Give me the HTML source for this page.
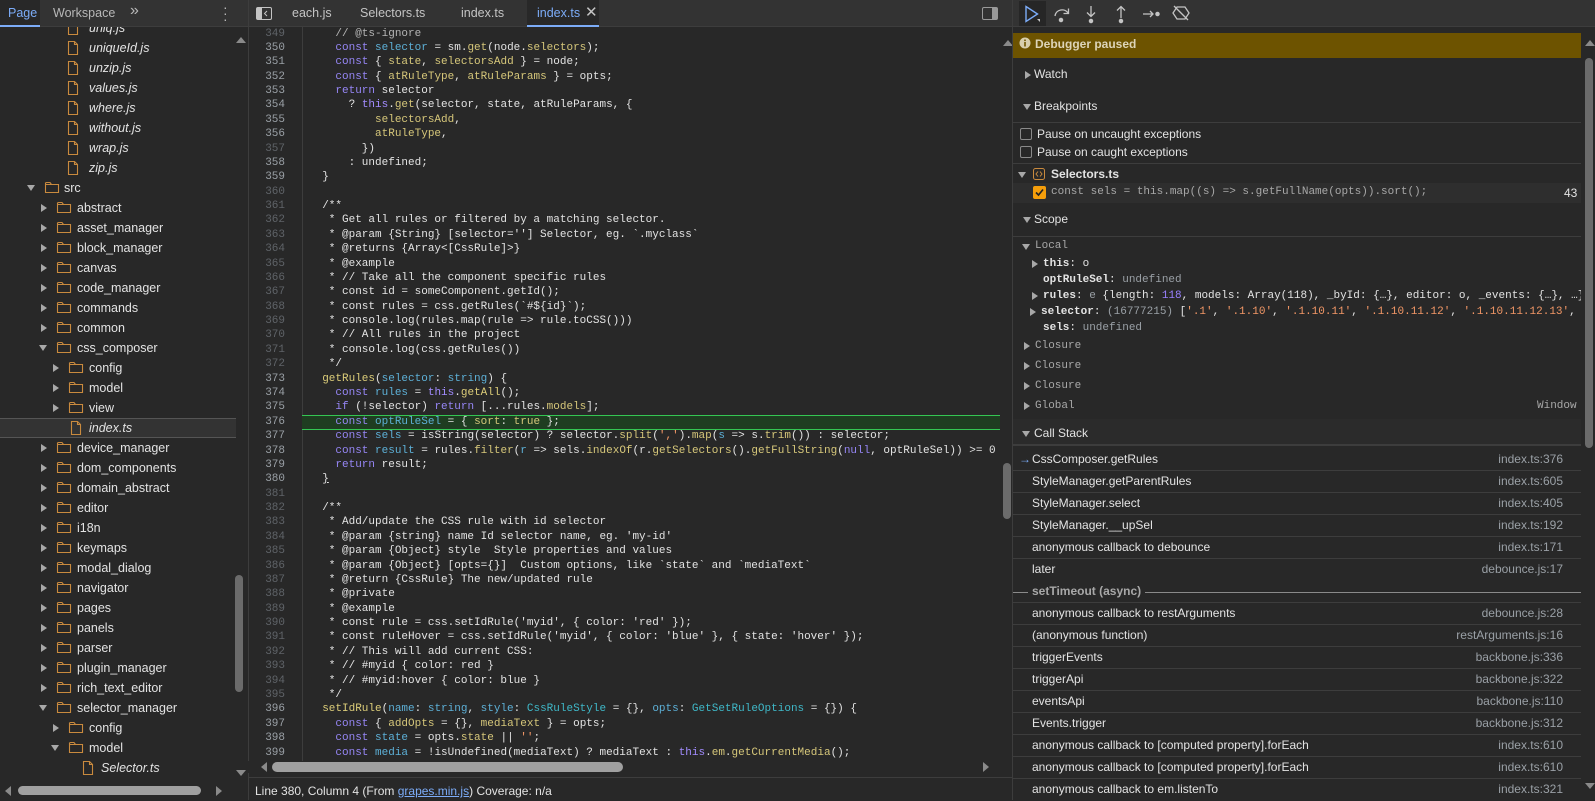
<!DOCTYPE html>
<html><head><meta charset="utf-8"><style>
*{box-sizing:border-box;margin:0;padding:0}
body{width:1595px;height:800px;background:#282828;overflow:hidden;position:relative;font-family:"Liberation Sans",sans-serif;font-size:12px;color:#e3e3e3}
.abs{position:absolute}
.hdr{position:absolute;top:0;height:27px;background:#333;border-bottom:1px solid #3d3d3d}
.tr{position:absolute;width:8px;height:8px}
.tr.r{border-left:6px solid #a8a8a8;border-top:4px solid transparent;border-bottom:4px solid transparent;width:0;height:0}
.tr.d{border-top:6px solid #a8a8a8;border-left:4px solid transparent;border-right:4px solid transparent;width:0;height:0}
.row{position:absolute;left:0;width:236px;height:20px;line-height:20px;white-space:nowrap;font-size:12.5px;color:#e3e3e3}
.row .tr.r{top:6px}.row .tr.d{top:7px}
.row svg{position:absolute;top:2px}
.row span.tx{position:absolute;color:#e3e3e3}
.it{font-style:italic}
.code{position:absolute;left:248px;top:26.5px;width:752px;height:734px;overflow:hidden}
.ln{position:absolute;left:0;width:752px;height:14.38px;line-height:14.38px;font-family:"Liberation Mono",monospace;font-size:11px;white-space:pre}
.ln b{position:absolute;right:715px;font-weight:normal;color:#9aa0a6;width:40px;text-align:right}
.ln b.dm{color:#5f6368}
.ln i{position:absolute;left:61px;font-style:normal;color:#e3e3e3}
.k{color:#9686f5}.d{color:#5db0d7}.p{color:#d6c77a}.f{color:#dccd79}.c{color:#b4b4b4}.s{color:#f29766}.t{color:#3fb8c8}.th{color:#a28cff}
.cs{position:absolute;left:1013px;width:568px;height:22px;line-height:21px;border-bottom:1px solid #3d3d3d}
.cs .n{position:absolute;left:19px}
.cs .l{position:absolute;right:18px;color:#9aa0a6}
.m{font-family:"Liberation Mono",monospace;font-size:11px}
.cb{position:absolute;width:12px;height:12px;border:1px solid #8a8a8a;border-radius:2px}
</style></head><body>

<!-- LEFT PANEL -->
<div class="hdr" style="left:0;width:248px"></div>
<div class="abs" style="left:0;top:0;width:40px;height:27px;background:#282828;border-bottom:2px solid #7cacf8"></div>
<div class="abs" style="left:8px;top:6px;color:#7cacf8;font-size:12.5px">Page</div>
<div class="abs" style="left:53px;top:6px;color:#b8b8b8;font-size:12.5px">Workspace</div>
<div class="abs" style="left:130px;top:2px;color:#b8b8b8;font-size:16px">»</div>
<div class="abs" style="left:223px;top:4px;color:#b8b8b8;font-size:14px;line-height:6px">·<br>·<br>·</div>
<div class="abs" style="left:248px;top:0;width:1px;height:800px;background:#3d3d3d"></div>

<svg width="0" height="0" style="position:absolute"><defs>
<symbol id="fo" viewBox="0 0 16 14"><path d="M1.5 3V12.5H14.5V4.5H7.5L6 2.5H2.5Z M1.5 4.5H14.5" fill="none" stroke="#c98a3e" stroke-width="1.1"/></symbol>
<symbol id="fi" viewBox="0 0 12 16"><path d="M1.5 1.5H7.5L10.5 4.5V14.5H1.5Z M7.5 1.5V4.5H10.5" fill="none" stroke="#c98a3e" stroke-width="1.1"/></symbol>
</defs></svg>

<div class="abs" style="left:0;top:27px;width:248px;height:754px;overflow:hidden">
<div style="position:absolute;left:0;top:-27px;width:248px">
<div class="row" style="top:18px"><svg style="left:67px" width="12" height="16"><use href="#fi"/></svg><span class="tx it" style="left:89px">uniq.js</span></div>
<div class="row" style="top:38px"><svg style="left:67px" width="12" height="16"><use href="#fi"/></svg><span class="tx it" style="left:89px">uniqueId.js</span></div>
<div class="row" style="top:58px"><svg style="left:67px" width="12" height="16"><use href="#fi"/></svg><span class="tx it" style="left:89px">unzip.js</span></div>
<div class="row" style="top:78px"><svg style="left:67px" width="12" height="16"><use href="#fi"/></svg><span class="tx it" style="left:89px">values.js</span></div>
<div class="row" style="top:98px"><svg style="left:67px" width="12" height="16"><use href="#fi"/></svg><span class="tx it" style="left:89px">where.js</span></div>
<div class="row" style="top:118px"><svg style="left:67px" width="12" height="16"><use href="#fi"/></svg><span class="tx it" style="left:89px">without.js</span></div>
<div class="row" style="top:138px"><svg style="left:67px" width="12" height="16"><use href="#fi"/></svg><span class="tx it" style="left:89px">wrap.js</span></div>
<div class="row" style="top:158px"><svg style="left:67px" width="12" height="16"><use href="#fi"/></svg><span class="tx it" style="left:89px">zip.js</span></div>
<div class="row" style="top:178px"><i class="tr d" style="left:27px"></i><svg style="left:44px" width="16" height="14"><use href="#fo"/></svg><span class="tx" style="left:64px">src</span></div>
<div class="row" style="top:198px"><i class="tr r" style="left:41px"></i><svg style="left:56px" width="16" height="14"><use href="#fo"/></svg><span class="tx" style="left:77px">abstract</span></div>
<div class="row" style="top:218px"><i class="tr r" style="left:41px"></i><svg style="left:56px" width="16" height="14"><use href="#fo"/></svg><span class="tx" style="left:77px">asset_manager</span></div>
<div class="row" style="top:238px"><i class="tr r" style="left:41px"></i><svg style="left:56px" width="16" height="14"><use href="#fo"/></svg><span class="tx" style="left:77px">block_manager</span></div>
<div class="row" style="top:258px"><i class="tr r" style="left:41px"></i><svg style="left:56px" width="16" height="14"><use href="#fo"/></svg><span class="tx" style="left:77px">canvas</span></div>
<div class="row" style="top:278px"><i class="tr r" style="left:41px"></i><svg style="left:56px" width="16" height="14"><use href="#fo"/></svg><span class="tx" style="left:77px">code_manager</span></div>
<div class="row" style="top:298px"><i class="tr r" style="left:41px"></i><svg style="left:56px" width="16" height="14"><use href="#fo"/></svg><span class="tx" style="left:77px">commands</span></div>
<div class="row" style="top:318px"><i class="tr r" style="left:41px"></i><svg style="left:56px" width="16" height="14"><use href="#fo"/></svg><span class="tx" style="left:77px">common</span></div>
<div class="row" style="top:338px"><i class="tr d" style="left:39px"></i><svg style="left:56px" width="16" height="14"><use href="#fo"/></svg><span class="tx" style="left:77px">css_composer</span></div>
<div class="row" style="top:358px"><i class="tr r" style="left:53px"></i><svg style="left:68px" width="16" height="14"><use href="#fo"/></svg><span class="tx" style="left:89px">config</span></div>
<div class="row" style="top:378px"><i class="tr r" style="left:53px"></i><svg style="left:68px" width="16" height="14"><use href="#fo"/></svg><span class="tx" style="left:89px">model</span></div>
<div class="row" style="top:398px"><i class="tr r" style="left:53px"></i><svg style="left:68px" width="16" height="14"><use href="#fo"/></svg><span class="tx" style="left:89px">view</span></div>
<div class="row" style="top:418px;background:#333;border-top:1px solid #555;border-bottom:1px solid #555"><svg style="left:70px;top:1px" width="12" height="16"><use href="#fi"/></svg><span class="tx it" style="left:89px;top:-1px">index.ts</span></div>
<div class="row" style="top:438px"><i class="tr r" style="left:41px"></i><svg style="left:56px" width="16" height="14"><use href="#fo"/></svg><span class="tx" style="left:77px">device_manager</span></div>
<div class="row" style="top:458px"><i class="tr r" style="left:41px"></i><svg style="left:56px" width="16" height="14"><use href="#fo"/></svg><span class="tx" style="left:77px">dom_components</span></div>
<div class="row" style="top:478px"><i class="tr r" style="left:41px"></i><svg style="left:56px" width="16" height="14"><use href="#fo"/></svg><span class="tx" style="left:77px">domain_abstract</span></div>
<div class="row" style="top:498px"><i class="tr r" style="left:41px"></i><svg style="left:56px" width="16" height="14"><use href="#fo"/></svg><span class="tx" style="left:77px">editor</span></div>
<div class="row" style="top:518px"><i class="tr r" style="left:41px"></i><svg style="left:56px" width="16" height="14"><use href="#fo"/></svg><span class="tx" style="left:77px">i18n</span></div>
<div class="row" style="top:538px"><i class="tr r" style="left:41px"></i><svg style="left:56px" width="16" height="14"><use href="#fo"/></svg><span class="tx" style="left:77px">keymaps</span></div>
<div class="row" style="top:558px"><i class="tr r" style="left:41px"></i><svg style="left:56px" width="16" height="14"><use href="#fo"/></svg><span class="tx" style="left:77px">modal_dialog</span></div>
<div class="row" style="top:578px"><i class="tr r" style="left:41px"></i><svg style="left:56px" width="16" height="14"><use href="#fo"/></svg><span class="tx" style="left:77px">navigator</span></div>
<div class="row" style="top:598px"><i class="tr r" style="left:41px"></i><svg style="left:56px" width="16" height="14"><use href="#fo"/></svg><span class="tx" style="left:77px">pages</span></div>
<div class="row" style="top:618px"><i class="tr r" style="left:41px"></i><svg style="left:56px" width="16" height="14"><use href="#fo"/></svg><span class="tx" style="left:77px">panels</span></div>
<div class="row" style="top:638px"><i class="tr r" style="left:41px"></i><svg style="left:56px" width="16" height="14"><use href="#fo"/></svg><span class="tx" style="left:77px">parser</span></div>
<div class="row" style="top:658px"><i class="tr r" style="left:41px"></i><svg style="left:56px" width="16" height="14"><use href="#fo"/></svg><span class="tx" style="left:77px">plugin_manager</span></div>
<div class="row" style="top:678px"><i class="tr r" style="left:41px"></i><svg style="left:56px" width="16" height="14"><use href="#fo"/></svg><span class="tx" style="left:77px">rich_text_editor</span></div>
<div class="row" style="top:698px"><i class="tr d" style="left:39px"></i><svg style="left:56px" width="16" height="14"><use href="#fo"/></svg><span class="tx" style="left:77px">selector_manager</span></div>
<div class="row" style="top:718px"><i class="tr r" style="left:53px"></i><svg style="left:68px" width="16" height="14"><use href="#fo"/></svg><span class="tx" style="left:89px">config</span></div>
<div class="row" style="top:738px"><i class="tr d" style="left:51px"></i><svg style="left:68px" width="16" height="14"><use href="#fo"/></svg><span class="tx" style="left:89px">model</span></div>
<div class="row" style="top:758px"><svg style="left:82px" width="12" height="16"><use href="#fi"/></svg><span class="tx it" style="left:101px">Selector.ts</span></div>
<div class="row" style="top:778px"><svg style="left:82px" width="12" height="16"><use href="#fi"/></svg><span class="tx it" style="left:101px">Selectors.ts</span></div>
</div></div>
<!-- left scrollbars -->
<div class="abs" style="left:236px;top:37px;width:0;height:0;border-left:5px solid transparent;border-right:5px solid transparent;border-bottom:6px solid #8a8a8a"></div>
<div class="abs" style="left:235px;top:575px;width:8px;height:117px;background:#6b6b6b;border-radius:4px"></div>
<div class="abs" style="left:236px;top:770px;width:0;height:0;border-left:5px solid transparent;border-right:5px solid transparent;border-top:6px solid #8a8a8a"></div>
<div class="abs" style="left:0;top:781px;width:248px;height:19px;background:#282828"></div>
<div class="abs" style="left:5px;top:786px;width:0;height:0;border-top:5px solid transparent;border-bottom:5px solid transparent;border-right:6px solid #8a8a8a"></div>
<div class="abs" style="left:18px;top:786px;width:183px;height:9px;background:#a0a0a0;border-radius:5px"></div>
<div class="abs" style="left:216px;top:786px;width:0;height:0;border-top:5px solid transparent;border-bottom:5px solid transparent;border-left:6px solid #8a8a8a"></div>

<!-- EDITOR -->
<div class="hdr" style="left:249px;width:763px"></div>
<svg class="abs" style="left:256px;top:7px" width="16" height="13"><rect x="0.5" y="0.5" width="15" height="12" rx="1.5" fill="none" stroke="#c4c4c4"/><rect x="1" y="1" width="5" height="11" fill="#c4c4c4"/><path d="M11 4L8.5 6.5L11 9" stroke="#c4c4c4" fill="none"/></svg>
<div class="abs" style="left:292px;top:6px;color:#c4c4c4;font-size:12.5px">each.js</div>
<div class="abs" style="left:360px;top:6px;color:#c4c4c4;font-size:12.5px">Selectors.ts</div>
<div class="abs" style="left:461px;top:6px;color:#c4c4c4;font-size:12.5px">index.ts</div>
<div class="abs" style="left:527px;top:0;width:72px;height:27px;background:#282828;border-bottom:2px solid #7cacf8"></div>
<div class="abs" style="left:537px;top:6px;color:#7cacf8;font-size:12.5px">index.ts</div>
<div class="abs" style="left:585px;top:3px;color:#c4c4c4;font-size:15px">✕</div>
<svg class="abs" style="left:982px;top:7px" width="16" height="13"><rect x="0.5" y="0.5" width="15" height="12" rx="1.5" fill="none" stroke="#9a9a9a"/><rect x="10" y="1" width="5" height="11" fill="#9a9a9a"/></svg>
<div class="abs" style="left:302px;top:27px;width:1px;height:734px;background:#3d3d3d"></div>

<div class="code">
<div class="ln" style="top:0"><b class="dm">349</b><i><span class="c">    // @ts-ignore</span></i></div>
<div class="ln" style="top:14.38px"><b>350</b><i>    <span class="k">const</span> <span class="d">selector</span> = sm.<span class="p">get</span>(node.<span class="p">selectors</span>);</i></div>
<div class="ln" style="top:28.76px"><b>351</b><i>    <span class="k">const</span> { <span class="p">state</span>, <span class="p">selectorsAdd</span> } = node;</i></div>
<div class="ln" style="top:43.14px"><b>352</b><i>    <span class="k">const</span> { <span class="p">atRuleType</span>, <span class="p">atRuleParams</span> } = opts;</i></div>
<div class="ln" style="top:57.52px"><b>353</b><i>    <span class="k">return</span> selector</i></div>
<div class="ln" style="top:71.9px"><b>354</b><i>      ? <span class="th">this</span>.<span class="p">get</span>(selector, state, atRuleParams, {</i></div>
<div class="ln" style="top:86.28px"><b>355</b><i>          <span class="p">selectorsAdd</span>,</i></div>
<div class="ln" style="top:100.66px"><b>356</b><i>          <span class="p">atRuleType</span>,</i></div>
<div class="ln" style="top:115.04px"><b class="dm">357</b><i>        })</i></div>
<div class="ln" style="top:129.42px"><b>358</b><i>      : undefined;</i></div>
<div class="ln" style="top:143.8px"><b>359</b><i>  }</i></div>
<div class="ln" style="top:158.18px"><b class="dm">360</b><i></i></div>
<div class="ln" style="top:172.56px"><b class="dm">361</b><i class="c">  /**</i></div>
<div class="ln" style="top:186.94px"><b class="dm">362</b><i class="c">   * Get all rules or filtered by a matching selector.</i></div>
<div class="ln" style="top:201.32px"><b class="dm">363</b><i class="c">   * @param {String} [selector=''] Selector, eg. `.myclass`</i></div>
<div class="ln" style="top:215.7px"><b class="dm">364</b><i class="c">   * @returns {Array&lt;[CssRule]&gt;}</i></div>
<div class="ln" style="top:230.08px"><b class="dm">365</b><i class="c">   * @example</i></div>
<div class="ln" style="top:244.46px"><b class="dm">366</b><i class="c">   * // Take all the component specific rules</i></div>
<div class="ln" style="top:258.84px"><b class="dm">367</b><i class="c">   * const id = someComponent.getId();</i></div>
<div class="ln" style="top:273.22px"><b class="dm">368</b><i class="c">   * const rules = css.getRules(`#${id}`);</i></div>
<div class="ln" style="top:287.6px"><b class="dm">369</b><i class="c">   * console.log(rules.map(rule =&gt; rule.toCSS()))</i></div>
<div class="ln" style="top:301.98px"><b class="dm">370</b><i class="c">   * // All rules in the project</i></div>
<div class="ln" style="top:316.36px"><b class="dm">371</b><i class="c">   * console.log(css.getRules())</i></div>
<div class="ln" style="top:330.74px"><b class="dm">372</b><i class="c">   */</i></div>
<div class="ln" style="top:345.12px"><b>373</b><i>  <span class="f">getRules</span>(<span class="d">selector</span>: <span class="d">string</span>) {</i></div>
<div class="ln" style="top:359.5px"><b>374</b><i>    <span class="k">const</span> <span class="d">rules</span> = <span class="th">this</span>.<span class="f">getAll</span>();</i></div>
<div class="ln" style="top:373.88px"><b>375</b><i>    <span class="k">if</span> (!selector) <span class="k">return</span> [...rules.<span class="p">models</span>];</i></div>
<div class="ln" style="top:388.26px"><b>376</b><span style="position:absolute;left:54px;width:698px;height:15px;top:0;background:#1f3d21;border-top:1px solid #34c653;border-bottom:1px solid #34c653"></span><i>    <span class="k">const</span> <span class="d">optRuleSel</span> = { <span class="p">sort</span>: <span class="p">true</span> };</i></div>
<div class="ln" style="top:402.64px"><b>377</b><i>    <span class="k">const</span> <span class="d">sels</span> = isString(selector) ? selector.<span class="p">split</span>(<span class="s">','</span>).<span class="p">map</span>(<span class="d">s</span> =&gt; s.<span class="p">trim</span>()) : selector;</i></div>
<div class="ln" style="top:417.02px"><b>378</b><i>    <span class="k">const</span> <span class="d">result</span> = rules.<span class="p">filter</span>(<span class="d">r</span> =&gt; sels.<span class="p">indexOf</span>(r.<span class="p">getSelectors</span>().<span class="p">getFullString</span>(<span class="k">null</span>, optRuleSel)) &gt;= 0</i></div>
<div class="ln" style="top:431.4px"><b>379</b><i>    <span class="k">return</span> result;</i></div>
<div class="ln" style="top:445.78px"><b>380</b><i>  <u>}</u></i></div>
<div class="ln" style="top:460.16px"><b class="dm">381</b><i></i></div>
<div class="ln" style="top:474.54px"><b class="dm">382</b><i class="c">  /**</i></div>
<div class="ln" style="top:488.92px"><b class="dm">383</b><i class="c">   * Add/update the CSS rule with id selector</i></div>
<div class="ln" style="top:503.3px"><b class="dm">384</b><i class="c">   * @param {string} name Id selector name, eg. 'my-id'</i></div>
<div class="ln" style="top:517.68px"><b class="dm">385</b><i class="c">   * @param {Object} style  Style properties and values</i></div>
<div class="ln" style="top:532.06px"><b class="dm">386</b><i class="c">   * @param {Object} [opts={}]  Custom options, like `state` and `mediaText`</i></div>
<div class="ln" style="top:546.44px"><b class="dm">387</b><i class="c">   * @return {CssRule} The new/updated rule</i></div>
<div class="ln" style="top:560.82px"><b class="dm">388</b><i class="c">   * @private</i></div>
<div class="ln" style="top:575.2px"><b class="dm">389</b><i class="c">   * @example</i></div>
<div class="ln" style="top:589.58px"><b class="dm">390</b><i class="c">   * const rule = css.setIdRule('myid', { color: 'red' });</i></div>
<div class="ln" style="top:603.96px"><b class="dm">391</b><i class="c">   * const ruleHover = css.setIdRule('myid', { color: 'blue' }, { state: 'hover' });</i></div>
<div class="ln" style="top:618.34px"><b class="dm">392</b><i class="c">   * // This will add current CSS:</i></div>
<div class="ln" style="top:632.72px"><b class="dm">393</b><i class="c">   * // #myid { color: red }</i></div>
<div class="ln" style="top:647.1px"><b class="dm">394</b><i class="c">   * // #myid:hover { color: blue }</i></div>
<div class="ln" style="top:661.48px"><b class="dm">395</b><i class="c">   */</i></div>
<div class="ln" style="top:675.86px"><b>396</b><i>  <span class="f">setIdRule</span>(<span class="d">name</span>: <span class="d">string</span>, <span class="d">style</span>: <span class="t">CssRuleStyle</span> = {}, <span class="d">opts</span>: <span class="t">GetSetRuleOptions</span> = {}) {</i></div>
<div class="ln" style="top:690.24px"><b>397</b><i>    <span class="k">const</span> { <span class="p">addOpts</span> = {}, <span class="p">mediaText</span> } = opts;</i></div>
<div class="ln" style="top:704.62px"><b>398</b><i>    <span class="k">const</span> <span class="d">state</span> = opts.<span class="p">state</span> || <span class="s">''</span>;</i></div>
<div class="ln" style="top:719px"><b>399</b><i>    <span class="k">const</span> <span class="d">media</span> = !isUndefined(mediaText) ? mediaText : <span class="th">this</span>.<span class="p">em</span>.<span class="p">getCurrentMedia</span>();</i></div>
</div>
<!-- editor scrollbars -->
<div class="abs" style="left:1003px;top:40px;width:0;height:0;border-left:5px solid transparent;border-right:5px solid transparent;border-bottom:6px solid #8a8a8a"></div>
<div class="abs" style="left:1003px;top:463px;width:8px;height:56px;background:#6b6b6b;border-radius:4px"></div>
<div class="abs" style="left:248px;top:761px;width:764px;height:12px;background:#282828"></div>
<div class="abs" style="left:261px;top:762px;width:0;height:0;border-top:5px solid transparent;border-bottom:5px solid transparent;border-right:6px solid #8a8a8a"></div>
<div class="abs" style="left:272px;top:762px;width:351px;height:10px;background:#a0a0a0;border-radius:5px"></div>
<div class="abs" style="left:983px;top:762px;width:0;height:0;border-top:5px solid transparent;border-bottom:5px solid transparent;border-left:6px solid #8a8a8a"></div>
<div class="abs" style="left:249px;top:777px;width:763px;height:1px;background:#3d3d3d"></div>
<div class="abs" style="left:255px;top:784px;font-size:12px;color:#e3e3e3">Line 380, Column 4  (From <span style="color:#7cacf8;text-decoration:underline">grapes.min.js</span>)  Coverage: n/a</div>

<!-- RIGHT PANEL -->
<div class="abs" style="left:1012px;top:0;width:1px;height:800px;background:#3d3d3d"></div>
<div class="hdr" style="left:1013px;width:582px"></div>
<div class="abs" style="left:1019px;top:1px;width:27px;height:25px;background:#262626"></div>
<svg class="abs" style="left:1022px;top:4px" width="20" height="20"><path d="M4 2.5L15.5 10L4 17.5Z" fill="none" stroke="#7cacf8" stroke-width="1.4"/><path d="M15 15L18 15L18 18Z" fill="#c4c4c4"/></svg>
<svg class="abs" style="left:1052px;top:4px" width="20" height="20" fill="none" stroke="#c4c4c4" stroke-width="1.3"><path d="M3 12C4 5 13 4 16 9"/><path d="M16.5 4.5V9.5H11.5"/><circle cx="9" cy="16" r="1.6" fill="#c4c4c4"/></svg>
<svg class="abs" style="left:1081px;top:4px" width="20" height="20" fill="none" stroke="#c4c4c4" stroke-width="1.3"><path d="M10 2V12M6 8.5L10 12.5L14 8.5"/><circle cx="10" cy="17" r="1.6" fill="#c4c4c4"/></svg>
<svg class="abs" style="left:1111px;top:4px" width="20" height="20" fill="none" stroke="#c4c4c4" stroke-width="1.3"><path d="M10 14V3M6 6.5L10 2.5L14 6.5"/><circle cx="10" cy="17" r="1.6" fill="#c4c4c4"/></svg>
<svg class="abs" style="left:1141px;top:4px" width="20" height="20" fill="none" stroke="#c4c4c4" stroke-width="1.3"><path d="M2 10H12M9 7L12 10L9 13"/><circle cx="16.5" cy="10" r="1.6" fill="#c4c4c4"/></svg>
<svg class="abs" style="left:1171px;top:3px" width="20" height="20" fill="none" stroke="#c4c4c4" stroke-width="1.3"><path d="M6 4H14L18 10L14 16H6L2 10Z"/><path d="M3 3L17 17"/></svg>

<!-- right scrollbar -->
<div class="abs" style="left:1585px;top:40px;width:0;height:0;border-left:5px solid transparent;border-right:5px solid transparent;border-bottom:6px solid #8a8a8a"></div>
<div class="abs" style="left:1585px;top:58px;width:8px;height:390px;background:#6b6b6b;border-radius:4px"></div>
<div class="abs" style="left:1585px;top:783px;width:0;height:0;border-left:5px solid transparent;border-right:5px solid transparent;border-top:6px solid #8a8a8a"></div>

<div class="abs" style="left:1013px;top:33px;width:568px;height:25px;background:#6d5300"></div>
<svg class="abs" style="left:1019px;top:37px" width="12" height="12"><circle cx="6" cy="6" r="5.5" fill="#d8cfae"/><rect x="5.2" y="5" width="1.6" height="4.5" fill="#6d5300"/><rect x="5.2" y="2.5" width="1.6" height="1.6" fill="#6d5300"/></svg>
<div class="abs" style="left:1035px;top:37px;font-weight:bold;color:#ddd4b8">Debugger paused</div>

<i class="tr r abs" style="left:1025px;top:71px"></i><div class="abs" style="left:1034px;top:67px">Watch</div>
<i class="tr d abs" style="left:1023px;top:104px"></i><div class="abs" style="left:1034px;top:99px">Breakpoints</div>
<div class="abs" style="left:1013px;top:122px;width:568px;height:1px;background:#3d3d3d"></div>
<div class="cb" style="left:1020px;top:128px"></div><div class="abs" style="left:1037px;top:127px">Pause on uncaught exceptions</div>
<div class="cb" style="left:1020px;top:146px"></div><div class="abs" style="left:1037px;top:145px">Pause on caught exceptions</div>
<div class="abs" style="left:1013px;top:163px;width:568px;height:1px;background:#3d3d3d"></div>
<i class="tr d abs" style="left:1018px;top:172px"></i>
<svg class="abs" style="left:1033px;top:168px" width="12" height="12"><rect x="0.5" y="0.5" width="11" height="11" rx="2" fill="none" stroke="#c98a3e"/><path d="M5 3.5L3 6L5 8.5M7 3.5L9 6L7 8.5" stroke="#c98a3e" fill="none"/></svg>
<div class="abs" style="left:1051px;top:167px;font-weight:bold">Selectors.ts</div>
<div class="abs" style="left:1013px;top:183px;width:568px;height:20px;background:#2e2e2e"></div>
<svg class="abs" style="left:1033px;top:186px" width="13" height="13"><rect width="13" height="13" rx="2" fill="#f59e0b"/><path d="M3 6.5L5.5 9L10 3.5" stroke="#222" stroke-width="1.6" fill="none"/></svg>
<div class="abs m" style="left:1051px;top:186px;color:#a8a8a8">const sels = this.map((s) =&gt; s.getFullName(opts)).sort();</div>
<div class="abs" style="left:1564px;top:186px">43</div>
<i class="tr d abs" style="left:1023px;top:217px"></i><div class="abs" style="left:1034px;top:212px">Scope</div>
<div class="abs" style="left:1013px;top:236px;width:568px;height:1px;background:#3d3d3d"></div>
<i class="tr d abs" style="left:1022px;top:244px"></i><div class="abs m" style="left:1035px;top:240px;color:#a8a8a8">Local</div>
<i class="tr r abs" style="left:1032px;top:260px"></i><div class="abs m" style="left:1043px;top:258px"><b style="color:#e3e3e3">this</b>: o</div>
<div class="abs m" style="left:1043px;top:274px"><b>optRuleSel</b>: <span style="color:#9aa0a6">undefined</span></div>
<i class="tr r abs" style="left:1032px;top:292px"></i><div class="abs m" style="left:1043px;top:290px;white-space:nowrap;width:538px;overflow:hidden"><b>rules</b>: <span style="color:#9aa0a6">e</span> {length: <span style="color:#9980ff">118</span>, models: Array(118), _byId: {…}, editor: o, _events: {…}, …}</div>
<i class="tr r abs" style="left:1030px;top:308px"></i><div class="abs m" style="left:1041px;top:306px;white-space:nowrap;width:540px;overflow:hidden"><b>selector</b>: <span style="color:#9aa0a6">(16777215)</span> [<span class="s">'.1'</span>, <span class="s">'.1.10'</span>, <span class="s">'.1.10.11'</span>, <span class="s">'.1.10.11.12'</span>, <span class="s">'.1.10.11.12.13'</span>,</div>
<div class="abs m" style="left:1043px;top:322px"><b>sels</b>: <span style="color:#9aa0a6">undefined</span></div>
<i class="tr r abs" style="left:1024px;top:342px"></i><div class="abs m" style="left:1035px;top:340px;color:#a8a8a8">Closure</div>
<i class="tr r abs" style="left:1024px;top:362px"></i><div class="abs m" style="left:1035px;top:360px;color:#a8a8a8">Closure</div>
<i class="tr r abs" style="left:1024px;top:382px"></i><div class="abs m" style="left:1035px;top:380px;color:#a8a8a8">Closure</div>
<i class="tr r abs" style="left:1024px;top:402px"></i><div class="abs m" style="left:1035px;top:400px;color:#a8a8a8">Global</div>
<div class="abs m" style="left:1537px;top:400px;color:#a8a8a8">Window</div>
<div class="abs" style="left:1013px;top:419px;width:568px;height:25px;background:#2b2b2b"></div>
<i class="tr d abs" style="left:1022px;top:431px"></i><div class="abs" style="left:1034px;top:426px">Call Stack</div>
<div class="abs" style="left:1013px;top:444px;width:568px;height:2px;background:#3d3d3d"></div>

<div class="cs" style="top:449px"><span class="abs" style="left:6px;color:#7cacf8">→</span><span class="n">CssComposer.getRules</span><span class="l">index.ts:376</span></div>
<div class="cs" style="top:471px"><span class="n">StyleManager.getParentRules</span><span class="l">index.ts:605</span></div>
<div class="cs" style="top:493px"><span class="n">StyleManager.select</span><span class="l">index.ts:405</span></div>
<div class="cs" style="top:515px"><span class="n">StyleManager.__upSel</span><span class="l">index.ts:192</span></div>
<div class="cs" style="top:537px"><span class="n">anonymous callback to debounce</span><span class="l">index.ts:171</span></div>
<div class="cs" style="top:559px;border-bottom:none"><span class="n">later</span><span class="l">debounce.js:17</span></div>
<div class="abs" style="left:1013px;top:592px;width:568px;height:1px;background:#8a8a8a"></div>
<div class="abs" style="left:1028px;top:584px;padding:0 4px;background:#282828;color:#a8a8a8;font-weight:bold">setTimeout (async)</div>
<div class="abs" style="left:1013px;top:602px;width:568px;height:1px;background:#3d3d3d"></div>
<div class="cs" style="top:603px"><span class="n">anonymous callback to restArguments</span><span class="l">debounce.js:28</span></div>
<div class="cs" style="top:625px"><span class="n">(anonymous function)</span><span class="l">restArguments.js:16</span></div>
<div class="cs" style="top:647px"><span class="n">triggerEvents</span><span class="l">backbone.js:336</span></div>
<div class="cs" style="top:669px"><span class="n">triggerApi</span><span class="l">backbone.js:322</span></div>
<div class="cs" style="top:691px"><span class="n">eventsApi</span><span class="l">backbone.js:110</span></div>
<div class="cs" style="top:713px"><span class="n">Events.trigger</span><span class="l">backbone.js:312</span></div>
<div class="cs" style="top:735px"><span class="n">anonymous callback to [computed property].forEach</span><span class="l">index.ts:610</span></div>
<div class="cs" style="top:757px"><span class="n">anonymous callback to [computed property].forEach</span><span class="l">index.ts:610</span></div>
<div class="cs" style="top:779px;border-bottom:none"><span class="n">anonymous callback to em.listenTo</span><span class="l">index.ts:321</span></div>

</body></html>
